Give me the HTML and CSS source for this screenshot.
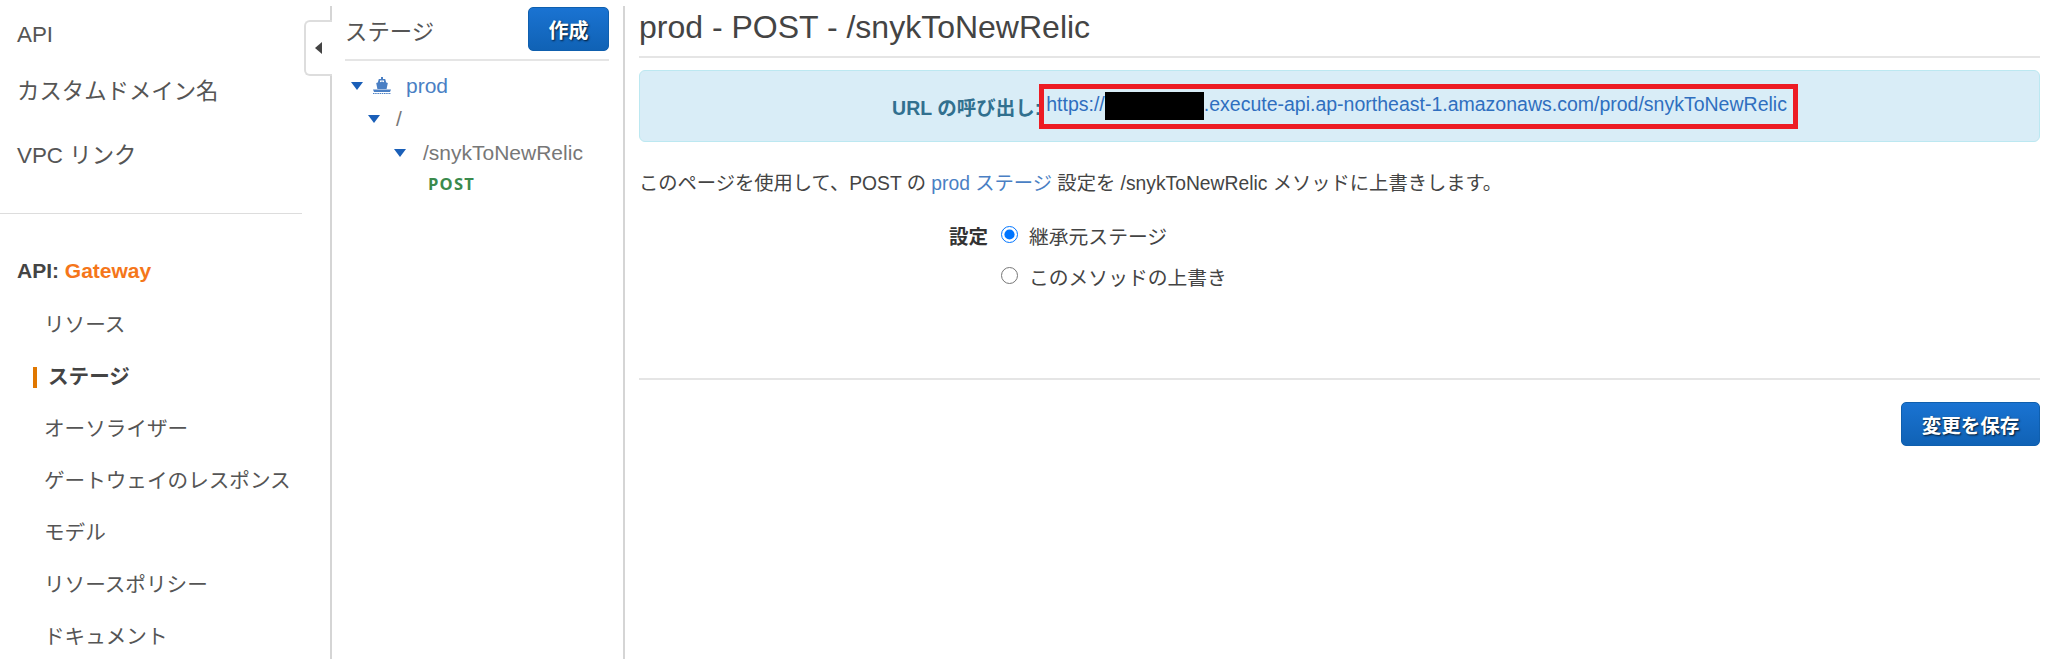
FILE: index.html
```html
<!DOCTYPE html>
<html lang="ja">
<head>
  <meta charset="UTF-8" />
  <title>API Gateway</title>
  <link rel="stylesheet" href="styles.css">
</head>
<body>
  <div class="page">
    <nav class="sidebar">
      <ul class="nav-top">
        <li class="nav-api">API</li>
        <li class="nav-domain">カスタムドメイン名</li>
        <li class="nav-vpc">VPC リンク</li>
      </ul>
      <hr class="nav-rule" />
      <div class="nav-heading">API: <span class="orange">Gateway</span></div>
      <ul class="nav-list">
        <li>リソース</li>
        <li class="current">ステージ</li>
        <li>オーソライザー</li>
        <li>ゲートウェイのレスポンス</li>
        <li>モデル</li>
        <li>リソースポリシー</li>
        <li>ドキュメント</li>
      </ul>
    </nav>

    <section class="stages">
      <div class="toggle"><span class="toggle-arrow"></span></div>
      <div class="stages-head">
        <span class="stages-title">ステージ</span>
        <button class="btn btn-create">作成</button>
      </div>
      <div class="tree">
        <div class="tree-row level-0">
          <span class="caret"></span>
          <svg class="ship" viewBox="0 0 18 18" width="18" height="18">
            <path fill="#4a7fc4" d="M8 0h2v2h2.2l1 3.4 1.6.6L13.6 12H4.400L3.200 6l1.600-.6L5.800 2H8zM7 3.600v1.600l2-.7 2 .7V3.600z" />
            <path fill="#4a7fc4" d="M0 12.500h18l-1 2.500H1z" />
            <path fill="none" stroke="#4a7fc4" stroke-width="1" stroke-dasharray="1.500 .7" d="M0 16.500h18" />
          </svg>
          <span class="tree-link">prod</span>
        </div>
        <div class="tree-row level-1">
          <span class="caret"></span>
          <span class="tree-text">/</span>
        </div>
        <div class="tree-row level-2">
          <span class="caret"></span>
          <span class="tree-text">/snykToNewRelic</span>
        </div>
        <div class="tree-method">POST</div>
      </div>
    </section>

    <main class="content">
      <h1 class="title">prod - POST - /snykToNewRelic</h1>
      <div class="alert">
        <strong>URL の呼び出し:</strong>
        <a class="url">https://<span class="masked"></span>.execute-api.ap-northeast-1.amazonaws.com/prod/snykToNewRelic</a>
        <div class="highlight"></div>
      </div>
      <p class="desc">このページを使用して、POST の <a class="link">prod ステージ</a> 設定を /snykToNewRelic メソッドに上書きします。</p>
      <div class="settings">
        <div class="settings-label">設定</div>
        <div class="settings-options">
          <label class="option"><input type="radio" name="setting" checked /> 継承元ステージ</label>
          <label class="option"><input type="radio" name="setting" /> このメソッドの上書き</label>
        </div>
      </div>
      <hr class="content-rule" />
      <div class="actions">
        <button class="btn btn-save">変更を保存</button>
      </div>
    </main>
  </div>
</body>
</html>
```

FILE: styles.css
```css
* {
  box-sizing: border-box;
}

html, body {
  margin: 0;
  height: 659px;
  overflow: hidden;
  background: #fff;
}

body {
  font-family: "Liberation Sans", "Noto Sans CJK JP", sans-serif;
  font-size: 19.500px;
  color: #444;
}

ul {
  list-style: none;
  margin: 0;
  padding: 0;
}

.page {
  display: flex;
  height: 659px;
}

/* left nav */
.sidebar {
  width: 330px;
  flex: none;
  font-size: 22.400px;
  color: #555;
}

.sidebar li, .nav-heading {
  height: 30px;
  line-height: 30px;
}

.nav-api {
  margin-top: 20px;
}

.nav-domain {
  margin-top: 27px;
}

.nav-vpc {
  margin-top: 34px;
}

.nav-top {
  padding-left: 17px;
}

.nav-rule {
  width: 302px;
  margin: 42px 0 0;
  border: 0;
  border-top: 1px solid #ddd;
}

.nav-heading {
  margin-top: 42px;
  padding-left: 17px;
  font-size: 21px;
  font-weight: bold;
  color: #444;
}

.orange {
  color: #f5761a;
}

.nav-list {
  padding-left: 44px;
  padding-top: 2px;
  font-size: 20.600px;
}

.nav-list li {
  margin-top: 22px;
  position: relative;
}

.nav-list .current {
  padding-left: 4px;
  font-weight: bold;
  color: #444;
}

.nav-list .current::before {
  content: "";
  position: absolute;
  left: -11px;
  top: 5px;
  width: 4px;
  height: 21px;
  background: #e07700;
}

/* stage tree */
.stages {
  position: relative;
  width: 293px;
  flex: none;
  margin-top: 6px;
  padding: 0 14px 0 13px;
  border-left: 2px solid #d5d5d5;
}

.toggle {
  position: absolute;
  left: -28px;
  top: 14px;
  width: 28px;
  height: 56px;
  background: #fff;
  border: 2px solid #ddd;
  border-right: 0;
  border-radius: 6px 0 0 6px;
}

.toggle-arrow {
  position: absolute;
  left: 9px;
  top: 20px;
  border-style: solid;
  border-width: 6px 7px 6px 0;
  border-color: transparent #444 transparent transparent;
}

.stages-head {
  display: flex;
  align-items: flex-start;
  justify-content: space-between;
  height: 55px;
  border-bottom: 2px solid #e5e5e5;
}

.stages-title {
  padding-top: 12px;
  font-size: 22.400px;
  line-height: 30px;
  color: #555;
}

.btn {
  font-family: inherit;
  font-weight: bold;
  color: #fff;
  border: 1px solid #0f5fae;
  border-radius: 5px;
  background: linear-gradient(#1a73d2, #1062b5);
  text-shadow: 1px 1px 2px rgba(0, 0, 0, 0.8);
  cursor: pointer;
}

.btn-create {
  width: 81px;
  height: 44px;
  margin-top: 1px;
  font-size: 20px;
}

.tree {
  padding-top: 8px;
  font-size: 21px;
}

.tree-row {
  display: flex;
  align-items: center;
  height: 33.500px;
}

.caret {
  flex: none;
  width: 0;
  height: 0;
  border-style: solid;
  border-width: 8px 6px 0;
  border-color: #1a5fb8 transparent transparent;
}

.ship {
  margin-left: 10px;
}

.level-0 {
  padding-left: 6px;
}

.level-1 {
  padding-left: 23px;
}

.level-2 {
  padding-left: 49px;
}

.tree-link {
  margin-left: 15px;
  color: #4a7fc4;
}

.tree-text {
  margin-left: 16px;
  color: #777;
}

.level-2 .tree-text {
  margin-left: 17px;
}

.tree-method {
  margin: 3px 0 0 83px;
  font-family: "Open Sans", sans-serif;
  font-size: 16.500px;
  line-height: 22px;
  font-weight: bold;
  letter-spacing: 1.200px;
  color: #3a8a4c;
}

/* main panel */
.content {
  flex: 1;
  margin-top: 6px;
  padding: 0 8px 0 14px;
  border-left: 2px solid #d5d5d5;
}

.title {
  margin: 0;
  height: 52px;
  padding-top: 3px;
  font-size: 32px;
  line-height: 36px;
  font-weight: normal;
  color: #444;
  border-bottom: 2px solid #e5e5e5;
}

.alert {
  position: relative;
  display: flex;
  align-items: center;
  justify-content: center;
  gap: 5px;
  height: 72px;
  margin-top: 12px;
  background: #d9edf7;
  border: 1px solid #bce8f1;
  border-radius: 6px;
}

.alert strong {
  color: #31708f;
}

.url {
  color: #2f6fbf;
}

.masked {
  display: inline-block;
  width: 99px;
  height: 28px;
  vertical-align: middle;
  background: #000;
}

.highlight {
  position: absolute;
  left: 399px;
  top: 13px;
  width: 759px;
  height: 45px;
  border: 5px solid #ed1c24;
}

.desc {
  margin: 28px 0 0;
  font-size: 19.300px;
  line-height: 28px;
}

.link {
  color: #4a7fc4;
}

.settings {
  display: flex;
  gap: 10px;
  margin-top: 22px;
  padding-left: 310px;
}

.settings-label {
  height: 30px;
  padding-top: 2px;
  line-height: 30px;
  font-weight: bold;
  color: #333;
}

.settings-options {
  padding-left: 3px;
}

.option {
  display: flex;
  align-items: center;
  gap: 11px;
  height: 30px;
  margin-bottom: 11px;
  font-size: 19.800px;
}

.option input {
  width: 17px;
  height: 17px;
  margin: -2px 0 0;
  accent-color: #0075ff;
}

.content-rule {
  margin: 76px 0 0;
  border: 0;
  border-top: 2px solid #e5e5e5;
}

.actions {
  display: flex;
  justify-content: flex-end;
  margin-top: 22px;
}

.btn-save {
  width: 139px;
  height: 44px;
  font-size: 19.500px;
}
```
